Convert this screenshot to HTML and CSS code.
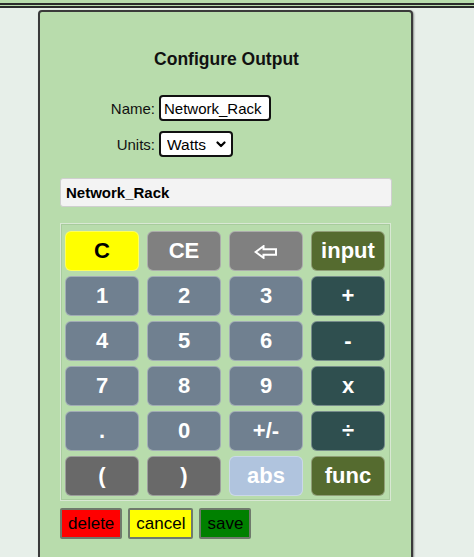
FILE: index.html
```html
<!DOCTYPE html>
<html>
<head>
<meta charset="utf-8">
<link rel="stylesheet" href="styles.css">
</head>
<body>
<div class="topbar"></div>
<div class="card">
  <h3 class="title">Configure Output</h3>
  <div class="fields">
    <label class="lbl" for="name">Name:</label>
    <input id="name" class="txt" type="text" value="Network_Rack">
    <label class="lbl" for="units">Units:</label>
    <span class="selwrap">
      <select id="units" class="sel"><option>Watts</option></select>
      <svg class="chev" width="10" height="7" viewBox="0 0 10 7"><path d="M1.5 1.5 L5 5 L8.5 1.5" fill="none" stroke="#000" stroke-width="2.2" stroke-linecap="round" stroke-linejoin="round"/></svg>
    </span>
  </div>
  <input class="display" type="text" value="Network_Rack">
  <div class="pad">
    <button class="k yellow">C</button>
    <button class="k gray">CE</button>
    <button class="k gray" aria-label="backspace"><svg class="bksp" width="24" height="14" viewBox="0 0 24 14"><path d="M1.6 7 L9.5 1.2 V4.3 H22 V9.7 H9.5 V12.8 Z" fill="none" stroke="#fff" stroke-width="2" stroke-linejoin="miter"/></svg></button>
    <button class="k olive">input</button>
    <button class="k slate">1</button>
    <button class="k slate">2</button>
    <button class="k slate">3</button>
    <button class="k dslate">+</button>
    <button class="k slate">4</button>
    <button class="k slate">5</button>
    <button class="k slate">6</button>
    <button class="k dslate">-</button>
    <button class="k slate">7</button>
    <button class="k slate">8</button>
    <button class="k slate">9</button>
    <button class="k dslate">x</button>
    <button class="k slate">.</button>
    <button class="k slate">0</button>
    <button class="k slate">+/-</button>
    <button class="k dslate">&#xF7;</button>
    <button class="k dim">(</button>
    <button class="k dim">)</button>
    <button class="k steel">abs</button>
    <button class="k olive">func</button>
  </div>
  <div class="actions">
    <button class="act red">delete</button>
    <button class="act yel">cancel</button>
    <button class="act grn">save</button>
  </div>
</div>
</body>
</html>
```
FILE: styles.css
```css
html, body {
  margin: 0;
  padding: 0;
}
body {
  background: #e7efe9;
  font-family: "Liberation Sans", Arial, sans-serif;
  height: 557px;
  overflow: hidden;
}
.topbar {
  height: 3px;
  background: #b8dcac;
  border-bottom: 5px double #2a2a2a;
}
.card {
  margin: 2px 0 0 38px;
  width: 331px;
  padding: 0 20px 40px;
  background: #b8dcac;
  border: 2px solid #3a3a3a;
  border-radius: 4px;
  box-shadow: 1px 1px 2px rgba(0,0,0,0.4);
  height: 600px;
}
.title {
  margin: 37px 0 0;
  text-align: center;
  font-size: 17.5px;
  line-height: 20px;
  font-weight: bold;
  color: #111;
  padding-left: 2px;
}
.fields {
  margin-top: 26px;
  display: grid;
  grid-template-columns: 95px auto;
  column-gap: 4px;
  row-gap: 10px;
  justify-content: start;
  align-items: center;
}
.lbl {
  text-align: right;
  font-size: 15px;
  color: #111;
}
.txt {
  width: 112px;
  height: 26px;
  box-sizing: border-box;
  border: 2px solid #111;
  border-radius: 4px;
  background: #fff;
  font-family: inherit;
  font-size: 15px;
  padding: 0 3px;
  color: #000;
  justify-self: start;
}
.selwrap {
  position: relative;
  width: 74px;
  height: 26px;
  justify-self: start;
}
.sel {
  appearance: none;
  -webkit-appearance: none;
  width: 74px;
  height: 26px;
  box-sizing: border-box;
  border: 2px solid #111;
  border-radius: 4px;
  background: #fff;
  font-family: inherit;
  font-size: 15.5px;
  padding: 0 6px;
  color: #000;
}
.chev {
  position: absolute;
  right: 7px;
  top: 10px;
  pointer-events: none;
}
.display {
  display: block;
  margin-top: 21px;
  width: 332px;
  height: 29px;
  box-sizing: border-box;
  border: 1px solid #cfcfcf;
  border-radius: 3px;
  background: #f3f3f3;
  font-family: inherit;
  font-size: 15px;
  font-weight: bold;
  padding: 0 5px;
  color: #000;
}
.pad {
  margin-top: 16px;
  width: 331px;
  box-sizing: border-box;
  border: 1px solid #d9e8d4;
  box-shadow: inset 0 0 0 1px rgba(120,150,110,0.25);
  padding: 7px 5px 4px 4px;
  display: grid;
  grid-template-columns: repeat(4, 74px);
  grid-auto-rows: 40px;
  column-gap: 8px;
  row-gap: 5px;
}
.k {
  margin: 0;
  border: 1px solid rgba(255,255,255,0.35);
  border-radius: 6px;
  font-family: inherit;
  font-size: 22px;
  font-weight: bold;
  color: #fff;
  padding: 0;
  line-height: 1;
}
.bksp {
  display: block;
  margin: 1px auto 0;
}
.yellow { background: #ffff00; color: #000; }
.gray { background: #808080; }
.olive { background: #556b2f; }
.slate { background: #708090; }
.dslate { background: #2f4f4f; }
.dim { background: #696969; }
.steel { background: #b0c4de; }
.actions {
  margin-top: 7px;
  display: flex;
  gap: 6px;
}
.act {
  margin: 0;
  height: 31px;
  border: 2px solid #6f7a6c;
  border-radius: 2px;
  font-family: inherit;
  font-size: 17px;
  color: #000;
  padding: 0 6px;
}
.red { background: #ff0000; }
.yel { background: #ffff00; }
.grn { background: #008000; }
```
